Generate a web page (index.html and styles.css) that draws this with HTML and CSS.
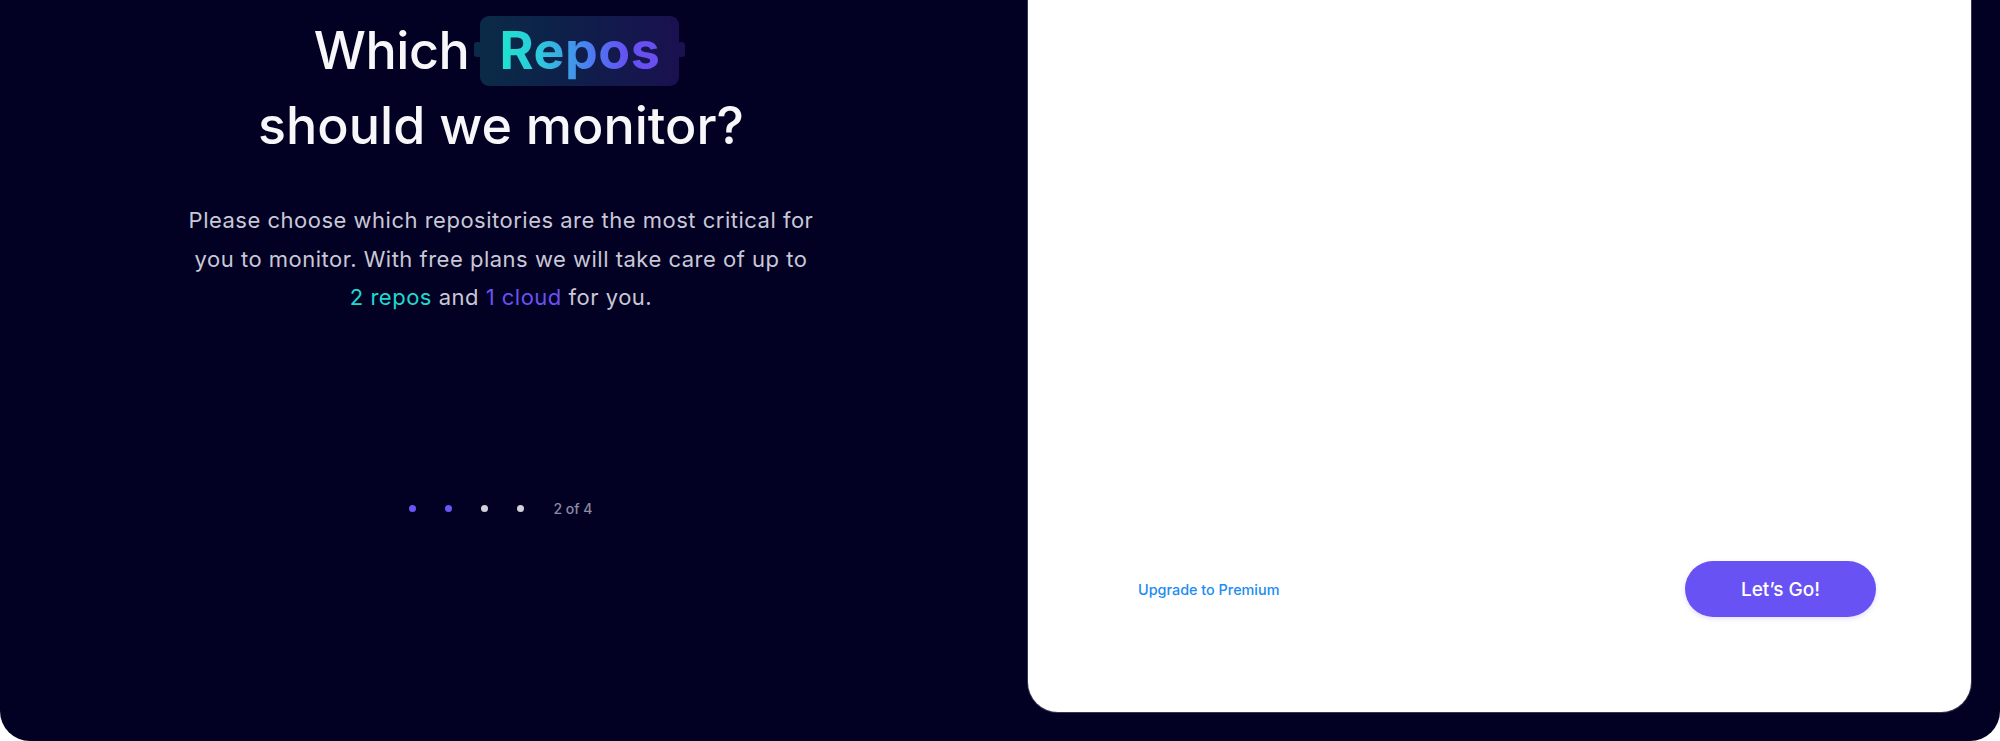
FILE: index.html
```html
<!DOCTYPE html>
<html lang="en">
<head>
<meta charset="utf-8">
<title>Which Repos should we monitor?</title>
<link rel="stylesheet" href="styles.css">
</head>
<body>
<div class="screen">
  <section class="intro">
    <h1 class="title">
      <span class="title-line first"><span class="word">Which</span><span class="badge"><span class="grad">Repos</span></span></span>
      <span class="title-line second">should we monitor?</span>
    </h1>
    <p class="lead">Please choose which repositories are the most critical for<br>you to monitor. With free plans we will take care of up to<br><span class="cyan">2 repos</span> and <span class="violet">1 cloud</span> for you.</p>
    <div class="steps">
      <span class="dot active"></span>
      <span class="dot active"></span>
      <span class="dot"></span>
      <span class="dot"></span>
      <span class="count">2 of 4</span>
    </div>
  </section>
  <section class="card">
    <div class="card-footer">
      <a class="upgrade" href="#">Upgrade to Premium</a>
      <button class="go" type="button">Let’s Go!</button>
    </div>
  </section>
</div>
</body>
</html>
```
FILE: styles.css
```css
* { box-sizing: border-box; }
html, body { margin: 0; padding: 0; }
body {
  background: #ffffff;
  font-family: Inter, "Noto Sans", "Liberation Sans", sans-serif;
  width: 2000px;
  height: 741px;
  overflow: hidden;
}
.screen {
  display: grid;
  grid-template-columns: 1002px 943px;
  column-gap: 26px;
  width: 2000px;
  height: 741px;
  padding: 0 29px 29px 0;
  background: #020023;
  border-radius: 0 0 30px 30px;
}
.intro {
  display: flex;
  flex-direction: column;
  align-items: center;
  padding-top: 16px;
}
.title {
  margin: 0;
  display: flex;
  flex-direction: column;
  align-items: center;
  font-size: 52px;
  font-weight: 500;
  color: #f7f7fa;
  letter-spacing: 0;
}
.title-line { display: flex; align-items: center; white-space: pre; }
.title-line.first { height: 70px; line-height: 70px; gap: 10px; }
.title-line.second { height: 80px; line-height: 80px; }
.word { letter-spacing: -0.4px; }
.badge {
  position: relative;
  display: inline-flex;
  align-items: center;
  height: 70px;
  margin-right: 9px;
  padding: 0 19px 0 20px;
  border-radius: 9px;
  background: linear-gradient(90deg, #0a2b47 0%, #0f1e4a 50%, #1a1150 100%);
  font-weight: 700;
  letter-spacing: 0.5px;
}
.badge::before,
.badge::after {
  content: "";
  position: absolute;
  top: 26px;
  width: 8px;
  height: 15px;
  border-radius: 3px;
}
.badge::before { left: -6px; background: #0a2b47; }
.badge::after { right: -6px; background: #1a1150; }
.grad {
  background: linear-gradient(90deg, #1de3cf 0%, #2ec8dc 25%, #4a7ff0 55%, #6650f2 80%, #6a4ff0 100%);
  -webkit-background-clip: text;
  background-clip: text;
  color: transparent;
}
.lead {
  margin: 35px 0 0;
  font-size: 22px;
  line-height: 38.5px;
  color: #c9c8d6;
  text-align: center;
  letter-spacing: 0.5px;
}
.cyan { color: #1fd8d2; }
.violet { color: #6a52f0; }
.steps {
  display: flex;
  align-items: center;
  gap: 29px;
  height: 20px;
  margin-top: 182px;
}
.dot {
  width: 7px;
  height: 7px;
  border-radius: 50%;
  background: #d2d1da;
}
.dot.active { background: #6a56f6; }
.count {
  font-size: 14px;
  font-weight: 500;
  color: #8d8ca3;
}
.card {
  height: 712px;
  background: #ffffff;
  border-radius: 0 0 30px 30px;
  box-shadow: 0 0 0 1px rgba(180, 180, 195, 0.3);
  display: flex;
  flex-direction: column;
  justify-content: flex-end;
  padding: 0 95px 95px 110px;
}
.card-footer {
  display: flex;
  align-items: center;
  justify-content: space-between;
}
.upgrade {
  font-size: 14.4px;
  font-weight: 500;
  color: #1b8cf2;
  text-decoration: none;
}
.go {
  width: 191px;
  height: 56px;
  border: 0;
  border-radius: 28px;
  background: #6852f3;
  color: #ffffff;
  font-family: inherit;
  font-size: 19px;
  font-weight: 500;
  box-shadow: 0 2px 5px rgba(104, 82, 243, 0.18);
  cursor: pointer;
}
```
